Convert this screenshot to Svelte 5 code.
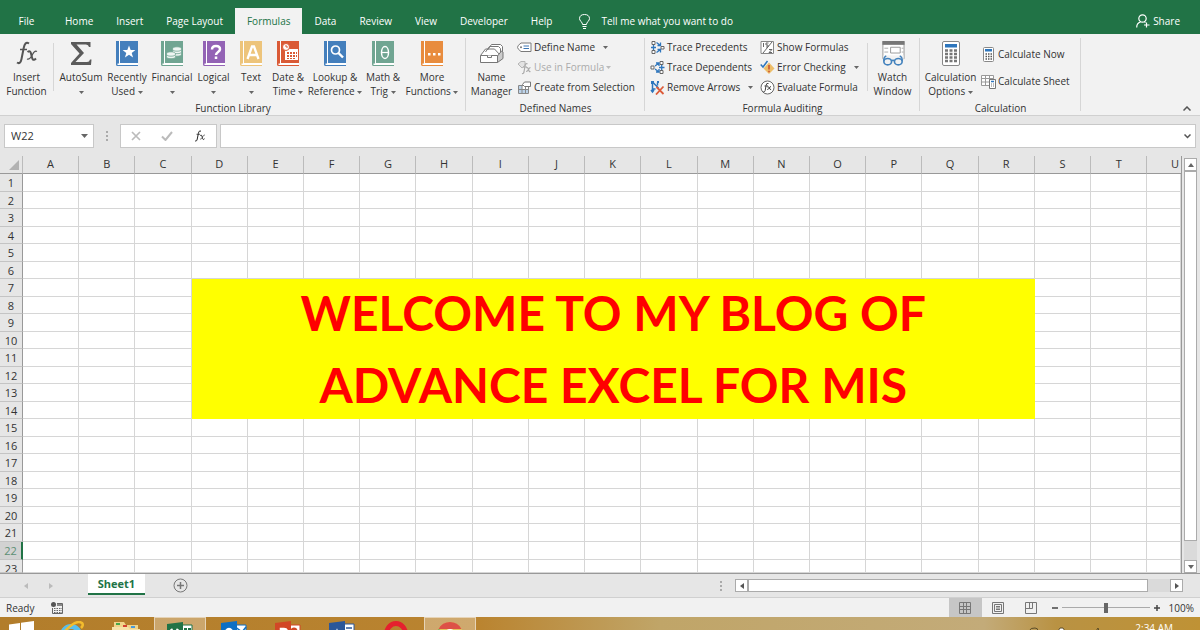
<script lang="ts">
  const tabs = ["Home", "Insert", "Page Layout", "Formulas", "Data", "Review", "View", "Developer", "Help"];
  let activeTab = $state("Formulas");

  const library = [
    { icon: "star", color: "#447fbc", lines: ["Recently", "Used"] },
    { icon: "coins", color: "#70a592", lines: ["Financial", ""] },
    { icon: "question", color: "#9363b5", lines: ["Logical", ""] },
    { icon: "letter", color: "#edc47b", lines: ["Text", ""] },
    { icon: "calendar", color: "#da5a36", lines: ["Date &", "Time"] },
    { icon: "search", color: "#447fbc", lines: ["Lookup &", "Reference"] },
    { icon: "theta", color: "#70a592", lines: ["Math &", "Trig"] },
    { icon: "dots", color: "#e88c3e", lines: ["More", "Functions"] },
  ];

  const columns = "ABCDEFGHIJKLMNOPQRSTU".split("");
  const rows = Array.from({ length: 23 }, (_, i) => i + 1);
  const selectedRow = 22;

  // D7:R14 is one merged cell
  const merge = { top: 7, bottom: 14, left: 3, right: 17 };

  function covered(row: number, col: number) {
    return row >= merge.top && row <= merge.bottom && col >= merge.left && col <= merge.right;
  }

  let nameBox = $state("W22");
  let formula = $state("");
  let zoom = $state(100);
</script>

{#snippet caret()}
  <svg class="caret" viewBox="0 0 5 3" aria-hidden="true"><path d="M0 0h5L2.5 3z" /></svg>
{/snippet}

{#snippet book(name: string, color: string)}
  <svg class="big-icon" width="22" height="25" viewBox="0 0 22 25" aria-hidden="true">
    <rect width="22" height="25" fill="#fff" />
    <path d="M0 0h3v22.5H1.5V24H22v1H1.5Q0 25 0 23.500z" fill={color} />
    <rect x="4" width="18" height="22" fill={color} />
    {#if name === "star"}
      <path d="M13 4.500l1.700 4.500h4.700l-3.700 2.900 1.400 4.600-4.100-2.700-4.100 2.700 1.400-4.600-3.700-2.900h4.700z" fill="#fff" />
    {:else if name === "coins"}
      <g fill="#eef5f2" stroke={color} stroke-width=".8">
        <ellipse cx="16" cy="13" rx="4.500" ry="2.200" /><ellipse cx="16" cy="10.500" rx="4.500" ry="2.200" /><ellipse cx="16" cy="8" rx="4.500" ry="2.200" />
        <ellipse cx="10" cy="15.500" rx="4.500" ry="2.200" /><ellipse cx="10" cy="13" rx="4.500" ry="2.200" />
      </g>
    {:else if name === "question"}
      <path d="M9 8.500Q9 5 13 5t4 3.300c0 2.700-4 2.700-4 5.700M13 15.500v2.500" fill="none" stroke="#fff" stroke-width="2.500" />
    {:else if name === "letter"}
      <path d="M7.500 18L12 5.500h2L18.500 18M9 14h8" fill="none" stroke="#fff" stroke-width="2.300" />
    {:else if name === "calendar"}
      <path d="M8 8h13v11H8z" fill="#fff" />
      <path d="M10 11h2v2h-2zm3 0h2v2h-2zm3 0h2v2h-2zm-6 3h2v2h-2zm3 0h2v2h-2zm3 0h2v2h-2zm3-3h1v2h-1zm0 3h1v2h-1zM10 17h2v1h-2zm3 0h2v1h-2zm3 0h2v1h-2z" fill={color} />
      <circle cx="9" cy="6" r="3.500" fill="#fff" stroke={color} />
      <path d="M9 4v2h2" fill="none" stroke={color} />
    {:else if name === "search"}
      <circle cx="11.500" cy="9" r="4" fill="none" stroke="#fff" stroke-width="1.700" />
      <path d="M14.500 12l4.500 4.500" stroke="#fff" stroke-width="2.400" />
    {:else if name === "theta"}
      <ellipse cx="13" cy="11.500" rx="3.500" ry="6" fill="none" stroke="#fff" stroke-width="1.500" />
      <path d="M9.500 11.500h7" stroke="#fff" stroke-width="1.200" />
    {:else if name === "dots"}
      <path d="M7 12h2.500v2.500H7zm5 0h2.500v2.500H12zm5 0h2.500v2.500H17z" fill="#fff" />
    {/if}
  </svg>
{/snippet}

{#snippet fxMark(size: number, color: string)}
  <svg width={size} height={size} viewBox="0 0 24 24" fill="none" stroke={color} aria-hidden="true">
    <path d="M14 2.500c-3-2-4.500.5-5.300 4.500L6.500 18c-.7 3.700-2.300 5-4.500 3.500" stroke-width="2" />
    <path d="M5 8.500h7" stroke-width="1.500" />
    <path d="M12.500 11c2.500-2 3.300 0 4 3.500s1.500 6 4.500 3" stroke-width="2" />
    <path d="M22 10.500c-2-1-3 0-4.500 3s-3 5.500-5.500 4.500" stroke-width="1.200" />
  </svg>
{/snippet}

{#snippet smallIcon(name: string)}
  <svg class="small-icon" width="15" height="15" viewBox="0 0 15 15" fill="none" aria-hidden="true">
    {#if name === "tag"}
      <path d="M4 3h10v8.500H4Q.5 9 .5 7.300.5 5.500 4 3z" fill="#fff" stroke="#7b7b7b" />
      <circle cx="4" cy="7.300" r="1" fill="#777" />
      <path d="M6.500 6h5.500M6.500 8.500h5.500" stroke="#3c76b4" />
    {:else if name === "use"}
      <path d="M1 4l3-2.500h4v4L5 8z" fill="#e3e3e3" stroke="#b5b5b5" />
      <path d="M10.500 4Q8.500 2.500 8 6l-1 6Q6.500 14 5 13.500M6 7h4M9.500 8q1.500-1 2 1.500t2 2M13.500 7.500q-1 0-2 2t-2.500 2" stroke="#aaa" stroke-width="1.200" />
    {:else if name === "create"}
      <path d="M1.500 5.500h10v8h-10z" fill="#fff" stroke="#888" />
      <path d="M2 6h3v7H2zM5 10h6v3H5z" fill="#bcd3ea" />
      <path d="M1.500 9.500h10M5 5.500v8M8.500 5.500v8" stroke="#888" />
      <path d="M5.500 4.500l2-2.500h6v4.500h-6z" fill="#fff" stroke="#777" />
    {:else if name === "precedents"}
      <path d="M2 1.500h3v3H2zm0 9h3v3H2zm9-4h3v2.500h-3z" fill="#fff" stroke="#666" />
      <path d="M1 7.500h5M3.500 5v5M6.500 2.500l4 3m0-3v3h-3M6.500 12.500l4-3m-3 0h3v3" stroke="#2e76bd" stroke-width="1.300" />
    {:else if name === "dependents"}
      <path d="M1 6h3v3H1zm9-4.500h3v3h-3zm0 9h3v3h-3z" fill="#fff" stroke="#666" />
      <path d="M9 7.500h5.500M11.700 5v5M5 6l4-3M6 3h3v3M5 9l4 3M9 9v3H6" stroke="#2e76bd" stroke-width="1.300" />
    {:else if name === "remove"}
      <path d="M2.500 2v9M2.500 2l6 6M2.500 9h3M7.500 2.500v3M1 10l1.500 2L4 10" stroke="#2e76bd" stroke-width="1.500" />
      <path d="M1 1h3v3H1zm6 0h2v2H7z" fill="#2e76bd" />
      <path d="M6.500 7l7 7M13.500 6.500l-7.500 8" stroke="#dc5b39" stroke-width="1.800" />
    {:else if name === "show"}
      <path d="M1 13.500V1.500h12.500v12z" fill="#fff" stroke="#888" />
      <path d="M3.500 3v4M6 7h2V5H6V3h2.500M12 2L3 13M9 9.500h3l-3 3h3" stroke="#666" />
    {:else if name === "error"}
      <path d="M9 2.500l5.500 6L9 14 3.500 8.500z" fill="#edbd69" />
      <path d="M9 5v4.500M9 10.800v1.500" stroke="#c74c30" stroke-width="1.500" />
      <path d="M.7 4.500l2.300 2.500L7.500 1" stroke="#2e76bd" stroke-width="1.500" />
    {:else if name === "evaluate"}
      <circle cx="7.500" cy="7.500" r="6.500" fill="#fff" stroke="#666" />
      <path d="M8.500 3.500Q6.500 2.500 6 5.500l-.8 5Q5 12 3.500 11.500M4.500 6h3.500M7.500 7q1.300-.8 1.800 1t1.800 1.500M11 6.500q-1 0-1.700 1.500t-2 1.500" stroke="#444" />
    {:else if name === "calc"}
      <rect x="2.500" y=".5" width="10" height="14" rx="1" fill="#fff" stroke="#888" />
      <path d="M4 2h7v2.500H4z" fill="#2e76bd" />
      <path d="M4.500 7h6.500M4.500 9.500h6.500M4.500 12h6.500" stroke="#555" stroke-width="1.500" stroke-dasharray="1.500 1" />
    {:else if name === "calcsheet"}
      <path d="M.5 1.500h12v10H.5zM.5 4.500h12M.5 8h12M4.500 1.500v10M8.500 1.500v10" fill="#fff" stroke="#999" />
      <path d="M8.500 5.500h6v9h-6z" fill="#fff" stroke="#777" />
      <path d="M10 7.500h3" stroke="#2e76bd" stroke-width="1.500" />
      <path d="M10 10h3M10 12h3" stroke="#777" stroke-dasharray="1 1" />
    {/if}
  </svg>
{/snippet}

{#snippet small(icon: string, label: string, menu = false, disabled = false)}
  <button class="small" {disabled}>
    {@render smallIcon(icon)}
    <span>{label}</span>
    {#if menu}{@render caret()}{/if}
  </button>
{/snippet}

<div class="window">
  <nav class="tabs">
    <button class="tab file">File</button>
    {#each tabs as tab}
      <button class="tab" class:active={tab === activeTab} onclick={() => (activeTab = tab)}>{tab}</button>
    {/each}
    <button class="tell">
      <svg width="11" height="15" viewBox="0 0 11 15" fill="none" stroke="#fff" aria-hidden="true">
        <path d="M3.500 10.500Q3.500 9 2 7.500.5 6 .5 4.500.8.500 5.500.500t5 4Q10.500 6 9 7.500 7.500 9 7.500 10.500zM3.500 12.500h4M4 14.500h3" />
      </svg>
      Tell me what you want to do
    </button>
    <button class="share">
      <svg width="14" height="14" viewBox="0 0 14 14" fill="none" stroke="#fff" stroke-width="1.200" aria-hidden="true">
        <circle cx="6.500" cy="4.500" r="3.700" /><path d="M.7 13.500Q.7 9 4.500 8M8.500 8l1 .5M10.500 8.500v5M8 11h5.500" />
      </svg>
      Share
    </button>
  </nav>

  <div class="ribbon">
    <section class="group">
      <div class="items library">
        <button class="big">
          <span class="big-icon">{@render fxMark(24, "#555")}</span>
          <span>Insert</span><span>Function</span>
        </button>
        <i class="divider"></i>
        <button class="big">
          <svg class="big-icon" width="22" height="25" viewBox="0 0 22 25" aria-hidden="true">
            <path d="M1 1h19.500v5H19Q18.500 3.500 16 3.500H6.500L14 12l-8.500 9H17q2.500 0 3-2.500h1.500L21 24H1v-2l8.500-9.500L1 3z" fill="#5b5b5b" />
          </svg>
          <span>AutoSum</span><span>{@render caret()}</span>
        </button>
        {#each library as item}
          <button class="big">
            {@render book(item.icon, item.color)}
            <span>{item.lines[0]}</span>
            <span>{item.lines[1]} {@render caret()}</span>
          </button>
        {/each}
      </div>
      <div class="group-label">Function Library</div>
    </section>

    <section class="group">
      <div class="items names">
        <button class="big">
          <svg class="big-icon" width="26" height="25" viewBox="0 0 26 25" fill="#fff" stroke="#777" aria-hidden="true">
            <path d="M8.500 9l4-5.500h9l2 2v5M6.500 11l4-5.500h9l2 2v5M1.500 14.500l5-6.500h9l6 6.500" />
            <path d="M18.500 15l4-5 1.500 1v6.500l-5.500 4z" fill="#ccc" />
            <path d="M1.500 14.500h17v7h-17z" />
            <path d="M8.500 14.500v2h4v-2" />
          </svg>
          <span>Name</span><span>Manager</span>
        </button>
        <div class="stack">
          {@render small("tag", "Define Name", true)}
          {@render small("use", "Use in Formula", true, true)}
          {@render small("create", "Create from Selection")}
        </div>
      </div>
      <div class="group-label">Defined Names</div>
    </section>

    <section class="group">
      <div class="items auditing">
        <div class="stack">
          {@render small("precedents", "Trace Precedents")}
          {@render small("dependents", "Trace Dependents")}
          {@render small("remove", "Remove Arrows", true)}
        </div>
        <div class="stack">
          {@render small("show", "Show Formulas")}
          {@render small("error", "Error Checking", true)}
          {@render small("evaluate", "Evaluate Formula")}
        </div>
        <i class="divider"></i>
        <button class="big">
          <svg class="big-icon" width="26" height="26" viewBox="0 0 26 26" fill="none" aria-hidden="true">
            <path d="M2.500.5h22v18h-22z" fill="#fff" stroke="#999" />
            <path d="M2 0h23v4H2z" fill="#777" />
            <path d="M4 7.500h4M4 11.500h4M22 7.500h2M22 11.500h2" stroke="#aaa" />
            <path d="M10.500 6.500h10v6h-10z" stroke="#999" />
            <path d="M3 15h21v11H3z" fill="#f2f2f2" />
            <path d="M3.500 21Q3 17 6 15.500M22.500 21Q23 17 20 15.500M11 21q2-2 4 0" stroke="#4382bd" stroke-width="1.500" />
            <ellipse cx="7.500" cy="21.500" rx="4" ry="3.300" stroke="#4382bd" stroke-width="1.700" />
            <ellipse cx="18.500" cy="21.500" rx="4" ry="3.300" stroke="#4382bd" stroke-width="1.700" />
          </svg>
          <span>Watch</span><span>Window</span>
        </button>
      </div>
      <div class="group-label">Formula Auditing</div>
    </section>

    <section class="group">
      <div class="items calculation">
        <button class="big">
          <svg class="big-icon" width="18" height="25" viewBox="0 0 18 25" aria-hidden="true">
            <rect x=".5" y=".5" width="17" height="24" rx="1.500" fill="#fff" stroke="#888" />
            <path d="M3 3h12v3.500H3z" fill="#2e76bd" />
            <path d="M3 9.500h12M3 13h12M3 16.500h12M3 20h12" stroke="#777" stroke-width="2.300" stroke-dasharray="3 1.500" />
          </svg>
          <span>Calculation</span>
          <span>Options {@render caret()}</span>
        </button>
        <div class="stack pair">
          {@render small("calc", "Calculate Now")}
          {@render small("calcsheet", "Calculate Sheet")}
        </div>
      </div>
      <div class="group-label">Calculation</div>
    </section>

    <button class="collapse" aria-label="Collapse the ribbon">
      <svg width="8" height="5" viewBox="0 0 8 5" fill="none" stroke="#555" stroke-width="1.500"><path d="M.5 4.500L4 1l3.500 3.500" /></svg>
    </button>
  </div>

  <div class="formula-bar">
    <div class="name-box">
      <input aria-label="Name box" bind:value={nameBox} />
      <button aria-label="Open name list">
        <svg width="7" height="4" viewBox="0 0 7 4" fill="#666"><path d="M0 0h7L3.500 4z" /></svg>
      </button>
    </div>
    <svg width="2" height="12" viewBox="0 0 2 12" fill="#aaa" aria-hidden="true"><path d="M0 1h2v2H0zm0 4h2v2H0zm0 4h2v2H0z" /></svg>
    <div class="entry-buttons">
      <button aria-label="Cancel">
        <svg width="10" height="10" viewBox="0 0 10 10" stroke="#bbb" stroke-width="1.700"><path d="M1 1l8 8M9 1L1 9" /></svg>
      </button>
      <button aria-label="Enter">
        <svg width="12" height="10" viewBox="0 0 12 10" fill="none" stroke="#bbb" stroke-width="2"><path d="M1 5.500L4.500 9 11 1" /></svg>
      </button>
      <button aria-label="Insert function">{@render fxMark(12, "#222")}</button>
    </div>
    <div class="formula">
      <input aria-label="Formula bar" bind:value={formula} />
      <button aria-label="Expand formula bar">
        <svg width="7" height="5" viewBox="0 0 7 5" fill="none" stroke="#555" stroke-width="1.500"><path d="M.5.5l3 3 3-3" /></svg>
      </button>
    </div>
  </div>

  <div class="sheet-area">
    <table class="sheet">
      <thead>
        <tr>
          <th class="corner" aria-label="Select all">
            <svg width="10" height="10" viewBox="0 0 10 10" fill="#b2b2b2"><path d="M10 0v10H0z" /></svg>
          </th>
          {#each columns as column}
            <th class="column-head" scope="col">{column}</th>
          {/each}
        </tr>
      </thead>
      <tbody>
        {#each rows as row}
          <tr>
            <th class="row-head" class:selected={row === selectedRow} scope="row">{row}</th>
            {#each columns as _, col}
              {#if row === merge.top && col === merge.left}
                <td class="banner" colspan="15" rowspan="8">WELCOME TO MY BLOG OF<br />ADVANCE EXCEL FOR MIS</td>
              {:else if !covered(row, col)}
                <td></td>
              {/if}
            {/each}
          </tr>
        {/each}
      </tbody>
    </table>
    <div class="v-scroll">
      <button aria-label="Scroll up"><svg width="6" height="4" viewBox="0 0 6 4" fill="#666"><path d="M0 4l3-4 3 4z" /></svg></button>
      <div class="v-thumb"></div>
      <div class="v-track"></div>
      <button aria-label="Scroll down"><svg width="6" height="4" viewBox="0 0 6 4" fill="#666"><path d="M0 0h6L3 4z" /></svg></button>
    </div>
  </div>

  <div class="sheet-bar">
    <button class="step" aria-label="Previous sheet"><svg width="4" height="6" viewBox="0 0 4 6" fill="#bbb"><path d="M4 0v6L0 3z" /></svg></button>
    <button class="step" aria-label="Next sheet"><svg width="4" height="6" viewBox="0 0 4 6" fill="#bbb"><path d="M0 0v6l4-3z" /></svg></button>
    <button class="sheet-tab">Sheet1</button>
    <button class="add" aria-label="New sheet">
      <svg width="15" height="15" viewBox="0 0 15 15" fill="none" stroke="#777"><circle cx="7.500" cy="7.500" r="6.500" /><path d="M7.500 4v7M4 7.500h7" stroke-width="1.500" /></svg>
    </button>
    <svg class="grip" width="2" height="10" viewBox="0 0 2 10" fill="#aaa" aria-hidden="true"><path d="M0 0h2v2H0zm0 4h2v2H0zm0 4h2v2H0z" /></svg>
    <div class="h-scroll">
      <button aria-label="Scroll left"><svg width="4" height="6" viewBox="0 0 4 6" fill="#555"><path d="M4 0v6L0 3z" /></svg></button>
      <div class="h-thumb"></div>
      <div class="h-track"></div>
      <button aria-label="Scroll right"><svg width="4" height="6" viewBox="0 0 4 6" fill="#555"><path d="M0 0v6l4-3z" /></svg></button>
    </div>
  </div>

  <footer class="status">
    <span class="ready">Ready</span>
    <svg width="12" height="12" viewBox="0 0 12 12" fill="none" stroke="#666" aria-hidden="true">
      <circle cx="2.500" cy="2.500" r="2.500" fill="#555" stroke="none" />
      <path d="M6 1.500h5.500v10h-10V6" /><path d="M6 3h5" stroke-width="1.500" />
      <path d="M3 6.500h8M3 8.500h8M3 10.500h8" stroke-dasharray="1.500 1" />
    </svg>
    <div class="views">
      <button class="current" aria-label="Normal view">
        <svg width="12" height="12" viewBox="0 0 12 12" fill="none" stroke="#777"><path d="M.5.5h11v11H.5zM.5 4.500h11M.5 7.500h11M4.500.5v11M7.500.5v11" /></svg>
      </button>
      <button aria-label="Page layout view">
        <svg width="12" height="12" viewBox="0 0 12 12" fill="none" stroke="#777"><path d="M.5.5h11v11H.5zM2.500 2.500h7v7h-7zM4 4.500h4M4 6h4M4 7.500h4" /></svg>
      </button>
      <button aria-label="Page break preview">
        <svg width="12" height="12" viewBox="0 0 12 12" fill="none" stroke="#777"><path d="M.5.500h11v11H.5zM.5 6.500h7v-6M4.500.5v6" /></svg>
      </button>
    </div>
    <button class="zoom-step" aria-label="Zoom out" onclick={() => (zoom -= 10)}>
      <svg width="6" height="8" viewBox="0 0 6 8" stroke="#444" stroke-width="1.500"><path d="M0 4h6" /></svg>
    </button>
    <input class="zoom" type="range" min="0" max="200" aria-label="Zoom" bind:value={zoom} />
    <button class="zoom-step" aria-label="Zoom in" onclick={() => (zoom += 10)}>
      <svg width="6" height="8" viewBox="0 0 6 8" stroke="#444" stroke-width="1.500"><path d="M0 4h6M3 1v6" /></svg>
    </button>
    <span class="percent">{zoom}%</span>
  </footer>

  <div class="taskbar">
    <button aria-label="Start">
      <svg width="26" height="24" viewBox="0 0 26 24" fill="#fff"><path d="M0 3.500L11 2v10H0zM12 1.800L25 0v12H12zM0 13h11v9.500L0 21zM12 13h13v11l-13-1.500z" /></svg>
    </button>
    <button aria-label="Internet Explorer">
      <svg width="26" height="26" viewBox="0 0 26 26" fill="none"><circle cx="12" cy="14" r="8.500" stroke="#58bfee" stroke-width="5" /><path d="M6 14h15" stroke="#58bfee" stroke-width="3" /><path d="M2 20C-2 16 16-3 23 2q2 2-1 5" stroke="#f3bc2d" stroke-width="2.500" /></svg>
    </button>
    <button aria-label="File Explorer">
      <svg width="28" height="24" viewBox="0 0 28 24"><path d="M2 1h10l2 3h12v18H2z" fill="#f0d48a" /><path d="M4 2h4v2H4z" fill="#47a84a" /><path d="M11 4h4v2h-4z" fill="#d44132" /><path d="M19 5h4v2h-4z" fill="#4a9ad8" /><path d="M0 6h16l2 2h10v15H0z" fill="#f6e2a8" /></svg>
    </button>
    <button class="open" aria-label="Excel">
      <svg width="26" height="26" viewBox="0 0 26 26"><path d="M12 3h13v20H12z" fill="#fff" stroke="#217346" /><path d="M17 6h3v2h-3zm4 0h3v2h-3zm-4 4h3v2h-3zm4 0h3v2h-3z" fill="#217346" /><path d="M0 2l16-2v26L0 24z" fill="#217346" /><path d="M4 7l7 11M11 7L4 18" stroke="#fff" stroke-width="2.500" /></svg>
    </button>
    <button aria-label="Outlook">
      <svg width="26" height="26" viewBox="0 0 26 26"><path d="M12 4h13v17H12z" fill="#fff" stroke="#0c6fc4" /><path d="M13 5l8 6 4-5" fill="none" stroke="#0c6fc4" stroke-width="1.500" /><path d="M0 2l16-2v26L0 24z" fill="#0c6fc4" /><ellipse cx="8" cy="13" rx="3.500" ry="5" fill="none" stroke="#fff" stroke-width="2.500" /></svg>
    </button>
    <button aria-label="PowerPoint">
      <svg width="26" height="26" viewBox="0 0 26 26"><path d="M12 4h13v17H12z" fill="#fff" stroke="#d24726" /><circle cx="19" cy="10" r="3.500" fill="#d24726" /><path d="M0 2l16-2v26L0 24z" fill="#d24726" /><path d="M6 19V8h3q3 0 3 3t-3 3H6" fill="none" stroke="#fff" stroke-width="2.500" /></svg>
    </button>
    <button aria-label="Word">
      <svg width="26" height="26" viewBox="0 0 26 26"><path d="M12 3h13v20H12z" fill="#fff" stroke="#2b579a" /><path d="M17 7h6M17 10h6" stroke="#2b579a" stroke-width="1.500" /><path d="M0 2l16-2v26L0 24z" fill="#2b579a" /><path d="M3 10l2 8 3-8 3 8 2-8" fill="none" stroke="#fff" stroke-width="2" /></svg>
    </button>
    <button aria-label="Opera">
      <svg width="26" height="26" viewBox="0 0 26 26" fill="none"><ellipse cx="13" cy="13" rx="9.500" ry="10.500" stroke="#e5202e" stroke-width="5" /></svg>
    </button>
    <button class="open" aria-label="Chrome">
      <svg width="26" height="26" viewBox="0 0 26 26"><circle cx="13" cy="13" r="13" fill="#e4c35b" /><path d="M1.500 7A13 13 0 0 1 24.500 7H13z" fill="#dd5147" /><path d="M1.500 7Q-2 16 6 23l7-10z" fill="#5aa460" /><circle cx="13" cy="13" r="6" fill="#fff" /></svg>
    </button>
    <svg class="tray" width="72" height="14" viewBox="0 0 72 14" fill="none" stroke="#5c4d28" aria-hidden="true">
      <path d="M1 13q0-2 5-2 3 0 3 3" /><path d="M29 14l2-3h3l2 3" fill="#fff" /><path d="M67 14l2-3 1 3" />
    </svg>
    <time>2:34 AM</time>
  </div>
</div>

<style>
  :global(body) {
    margin: 0;
  }

  .window {
    display: flex;
    flex-direction: column;
    height: 100vh;
    overflow: hidden;
    background: #e6e6e6;
    color: #333;
    font: 10px/14px "Open Sans", "Noto Sans", sans-serif;
  }

  button,
  input {
    margin: 0;
    padding: 0;
    border: 0;
    background: none;
    color: inherit;
    font: inherit;
  }

  svg {
    flex: none;
  }

  .caret {
    display: inline-block;
    width: 5px;
    height: 3px;
    fill: #666;
    vertical-align: middle;
  }

  .tabs {
    display: flex;
    gap: 1px;
    align-items: flex-end;
    height: 34px;
    background: #217346;
    color: #fff;
    font-weight: 500;
  }

  .tab {
    height: 26px;
    padding: 0 11px;
  }

  .tab.file {
    width: 53px;
  }

  .tab.active {
    padding: 0 12px;
    background: #f2f2f2;
    color: #217346;
  }

  .tell,
  .share {
    display: flex;
    align-items: center;
    gap: 11px;
    height: 26px;
    margin-left: 15px;
  }

  .share {
    gap: 3px;
    margin-left: auto;
    padding-right: 20px;
  }

  .ribbon {
    display: grid;
    grid-template-columns: 466px 179px 275px 161px 1fr;
    height: 81px;
    background: #f2f2f2;
    border-bottom: 1px solid #d0d0d0;
  }

  .group {
    display: flex;
    flex-direction: column;
    background: linear-gradient(#d6d6d6, #d6d6d6) no-repeat right 4px / 1px 73px;
  }

  .items {
    display: grid;
    height: 67px;
  }

  .library {
    grid-template-columns: 53px 5px 46px 46px 44px 39px 36px 38px 56px 40px 58px;
  }

  .names {
    grid-template-columns: 51px 1fr;
  }

  .auditing {
    grid-template-columns: 110px 107px 1px 49px;
    padding-left: 5px;
  }

  .calculation {
    grid-template-columns: 61px 1fr;
  }

  .divider {
    width: 1px;
    height: 48px;
    margin-top: 9px;
    background: #d6d6d6;
  }

  .group-label {
    text-align: center;
  }

  .big {
    display: flex;
    flex-direction: column;
    align-items: center;
    padding-top: 7px;
    white-space: nowrap;
  }

  .big span {
    height: 14px;
  }

  .big .big-icon {
    height: 25px;
    margin-bottom: 4px;
  }

  .stack {
    display: flex;
    flex-direction: column;
    padding-top: 3px;
  }

  .stack.pair {
    gap: 7px;
    padding-top: 10px;
  }

  .small {
    display: flex;
    align-items: center;
    gap: 2px;
    height: 20px;
    white-space: nowrap;
  }

  .small .caret {
    margin-left: 6px;
  }

  .small:disabled {
    color: #ababab;
  }

  .small:disabled .caret {
    margin-left: 0;
    fill: #bbb;
  }

  .collapse {
    justify-self: end;
    align-self: end;
    padding: 0 9px 4px;
    line-height: 0;
  }

  .formula-bar {
    display: flex;
    align-items: center;
    height: 40px;
    padding: 0 4px;
  }

  .name-box,
  .entry-buttons,
  .formula {
    display: flex;
    align-items: center;
    box-sizing: border-box;
    height: 24px;
    background: #fff;
    border: 1px solid #c8c8c8;
  }

  .name-box {
    width: 90px;
    margin-right: 12px;
    padding: 0 5px 0 6px;
    font-size: 11px;
  }

  .name-box input {
    flex: 1;
    min-width: 0;
  }

  .name-box button {
    line-height: 0;
  }

  .entry-buttons {
    justify-content: space-around;
    width: 97px;
    margin: 0 3px 0 12px;
  }

  .entry-buttons button {
    line-height: 0;
  }

  .formula {
    flex: 1;
    padding: 0 4px;
  }

  .formula input {
    flex: 1;
  }

  .formula button {
    line-height: 0;
  }

  .sheet-area {
    display: flex;
    gap: 2px;
    flex: 1;
    min-height: 0;
    padding-right: 3px;
    border-bottom: 1px solid #999;
  }

  /* The last column and the last row are cut off by the window's edge. */
  .sheet {
    display: grid;
    flex: 1;
    grid-template-columns: 23px repeat(20, minmax(0, 5fr)) minmax(0, 3fr);
    grid-template-rows: 18px repeat(22, minmax(0, 13fr)) minmax(0, 10fr);
    border-right: 1px solid #999;
  }

  .sheet thead,
  .sheet tbody,
  .sheet tr {
    display: contents;
  }

  .sheet th,
  .sheet td {
    box-sizing: border-box;
    padding: 0;
    overflow: hidden;
    font-weight: 400;
  }

  .sheet th {
    font-size: 11px;
    line-height: 18px;
    text-align: center;
  }

  .sheet td {
    background: #fff;
    border: solid #d6d6d6;
    border-width: 0 1px 1px 0;
  }

  .sheet .corner {
    padding: 4px 3px 0 0;
    border-right: 1px solid #bbb;
    border-bottom: 1px solid #999;
    line-height: 0;
    text-align: right;
  }

  .sheet .column-head {
    border-right: 1px solid #bbb;
    border-bottom: 1px solid #999;
    line-height: 16px;
  }

  .sheet .column-head:last-child {
    padding-right: 2px;
    border-right: 0;
    text-align: right;
  }

  .sheet .row-head {
    border-right: 1px solid #999;
    border-bottom: 1px solid #c4c4c4;
  }

  .sheet .row-head.selected {
    background: #d2d2d2;
    border-right: 2px solid #217346;
    color: #5c8f74;
  }

  .sheet .banner {
    display: flex;
    grid-row: span 8;
    grid-column: span 15;
    align-items: center;
    justify-content: center;
    background: #ff0;
    border: 0;
    color: #f00;
    font: 700 48px/72px Lato, sans-serif;
    text-align: center;
    white-space: nowrap;
  }

  .v-scroll {
    display: flex;
    flex-direction: column;
    width: 13px;
    padding-top: 2px;
  }

  .v-scroll button,
  .v-thumb {
    box-sizing: border-box;
    height: 13px;
    background: #fff;
    border: 1px solid #ababab;
    line-height: 0;
  }

  .v-scroll .v-thumb {
    flex: 1;
  }

  .v-track {
    height: 19px;
    background: #dadada;
  }

  .sheet-bar {
    display: flex;
    align-items: center;
    height: 23px;
    padding-right: 17px;
    border-bottom: 1px solid #d0d0d0;
  }

  .step {
    width: 25px;
    line-height: 0;
  }

  .step:first-child {
    margin-left: 13px;
  }

  .sheet-tab {
    align-self: flex-start;
    width: 57px;
    height: 21px;
    margin: 0 28px 0 25px;
    background: #fff;
    border-bottom: 2px solid #217346;
    color: #217346;
    font-size: 11px;
    font-weight: 700;
  }

  .add {
    line-height: 0;
  }

  .grip {
    margin: 0 13px 0 auto;
  }

  .h-scroll {
    display: flex;
    flex: 0 0 448px;
    height: 13px;
  }

  .h-scroll button,
  .h-thumb {
    box-sizing: border-box;
    width: 13px;
    background: #fff;
    border: 1px solid #ababab;
    line-height: 0;
  }

  .h-scroll .h-thumb {
    flex: 1;
  }

  .h-track {
    width: 22px;
    background: #dadada;
  }

  .status {
    display: flex;
    align-items: center;
    height: 19px;
    padding: 0 6px;
    background: #f1f1f1;
  }

  .ready {
    margin-right: 17px;
  }

  .views {
    display: flex;
    align-self: stretch;
    margin-left: auto;
  }

  .views button {
    width: 33px;
    line-height: 0;
  }

  .views .current {
    background: #c6c6c6;
  }

  .zoom-step {
    width: 14px;
    line-height: 0;
  }

  .zoom {
    width: 88px;
    height: 10px;
    appearance: none;
    background: linear-gradient(#aaa, #aaa) no-repeat center / 100% 1px;
  }

  .zoom::-webkit-slider-thumb {
    width: 4px;
    height: 10px;
    appearance: none;
    background: #666;
  }

  .percent {
    margin-left: 5px;
  }

  .taskbar {
    display: grid;
    grid-template-columns: 44px repeat(8, 52px) 1fr auto;
    gap: 2px;
    height: 13px;
    overflow: hidden;
    background: linear-gradient(90deg, #b27d2b, #ba8430 40%, #c0a568 55%, #c3ab79 82%, #b99243 88%, #bf9235);
  }

  .taskbar button {
    display: flex;
    justify-content: center;
    height: 40px;
    padding-top: 4px;
  }

  .taskbar .open {
    box-sizing: border-box;
    background: rgba(255, 255, 255, 0.3);
    border: 1px solid rgba(255, 255, 255, 0.5);
  }

  .tray {
    justify-self: end;
    margin-right: 32px;
  }

  .taskbar time {
    padding: 4px 27px 0 0;
    color: #fff;
  }
</style>
